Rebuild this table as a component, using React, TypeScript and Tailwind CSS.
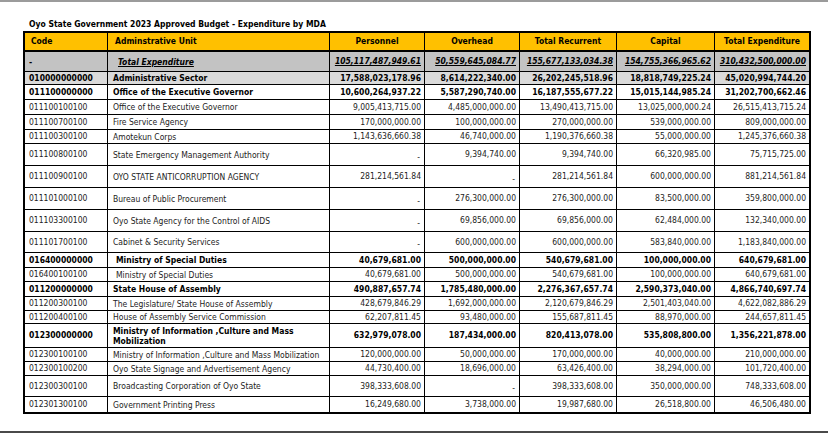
import React from "react";

type Row = {
  code: string;
  name: string;
  vals: string[];
  h: string;
  bold?: boolean;
  bg?: string;
  indent?: boolean;
  total?: boolean;
};

const rows: Row[] = [
  { code: "-", name: "Total Expenditure", vals: ["105,117,487,949.61", "50,559,645,084.77", "155,677,133,034.38", "154,755,366,965.62", "310,432,500,000.00"], h: "h-[20px]", bold: true, bg: "bg-[#c3c3c3]", total: true },
  { code: "010000000000", name: "Administrative Sector", vals: ["17,588,023,178.96", "8,614,222,340.00", "26,202,245,518.96", "18,818,749,225.24", "45,020,994,744.20"], h: "h-[13px]", bold: true, bg: "bg-[#dadada]" },
  { code: "011100000000", name: "Office of the Executive Governor", vals: ["10,600,264,937.22", "5,587,290,740.00", "16,187,555,677.22", "15,015,144,985.24", "31,202,700,662.46"], h: "h-[15px]", bold: true },
  { code: "011100100100", name: "Office of the Executive Governor", vals: ["9,005,413,715.00", "4,485,000,000.00", "13,490,413,715.00", "13,025,000,000.24", "26,515,413,715.24"], h: "h-[15px]" },
  { code: "011100700100", name: "Fire Service Agency", vals: ["170,000,000.00", "100,000,000.00", "270,000,000.00", "539,000,000.00", "809,000,000.00"], h: "h-[15px]" },
  { code: "011100300100", name: "Amotekun Corps", vals: ["1,143,636,660.38", "46,740,000.00", "1,190,376,660.38", "55,000,000.00", "1,245,376,660.38"], h: "h-[14px]" },
  { code: "011100800100", name: "State Emergency Management Authority", vals: ["-", "9,394,740.00", "9,394,740.00", "66,320,985.00", "75,715,725.00"], h: "h-[22px]" },
  { code: "011100900100", name: "OYO STATE ANTICORRUPTION AGENCY", vals: ["281,214,561.84", "-", "281,214,561.84", "600,000,000.00", "881,214,561.84"], h: "h-[22px]" },
  { code: "011101000100", name: "Bureau of Public Procurement", vals: ["-", "276,300,000.00", "276,300,000.00", "83,500,000.00", "359,800,000.00"], h: "h-[22px]" },
  { code: "011103300100", name: "Oyo State Agency for the Control of AIDS", vals: ["-", "69,856,000.00", "69,856,000.00", "62,484,000.00", "132,340,000.00"], h: "h-[22px]" },
  { code: "011101700100", name: "Cabinet & Security Services", vals: ["-", "600,000,000.00", "600,000,000.00", "583,840,000.00", "1,183,840,000.00"], h: "h-[21px]" },
  { code: "016400000000", name: "Ministry of Special Duties", vals: ["40,679,681.00", "500,000,000.00", "540,679,681.00", "100,000,000.00", "640,679,681.00"], h: "h-[15px]", bold: true, indent: true },
  { code: "016400100100", name: "Ministry of Special Duties", vals: ["40,679,681.00", "500,000,000.00", "540,679,681.00", "100,000,000.00", "640,679,681.00"], h: "h-[14px]", indent: true },
  { code: "011200000000", name: "State House of Assembly", vals: ["490,887,657.74", "1,785,480,000.00", "2,276,367,657.74", "2,590,373,040.00", "4,866,740,697.74"], h: "h-[15px]", bold: true },
  { code: "011200300100", name: "The Legislature/ State House of Assembly", vals: ["428,679,846.29", "1,692,000,000.00", "2,120,679,846.29", "2,501,403,040.00", "4,622,082,886.29"], h: "h-[14px]" },
  { code: "011200400100", name: "House of Assembly Service Commission", vals: ["62,207,811.45", "93,480,000.00", "155,687,811.45", "88,970,000.00", "244,657,811.45"], h: "h-[13px]" },
  { code: "012300000000", name: "Ministry of Information ,Culture and Mass Mobilization", vals: ["632,979,078.00", "187,434,000.00", "820,413,078.00", "535,808,800.00", "1,356,221,878.00"], h: "h-[24px]", bold: true },
  { code: "012300100100", name: "Ministry of Information ,Culture and Mass Mobilization", vals: ["120,000,000.00", "50,000,000.00", "170,000,000.00", "40,000,000.00", "210,000,000.00"], h: "h-[14px]" },
  { code: "012300100200", name: "Oyo State Signage and Advertisement Agency", vals: ["44,730,400.00", "18,696,000.00", "63,426,400.00", "38,294,000.00", "101,720,400.00"], h: "h-[14px]" },
  { code: "012300300100", name: "Broadcasting Corporation of Oyo State", vals: ["398,333,608.00", "-", "398,333,608.00", "350,000,000.00", "748,333,608.00"], h: "h-[21px]" },
  { code: "012301300100", name: "Government Printing Press", vals: ["16,249,680.00", "3,738,000.00", "19,987,680.00", "26,518,800.00", "46,506,480.00"], h: "h-[15px]" },
];

const GRID = "grid grid-cols-[83px_222px_95px_95px_97px_98px_94px]";

export default function App() {
  return (
    <div className="w-[828px] h-[434px] bg-white flex flex-col font-['DejaVu_Sans_Condensed','DejaVu_Sans',sans-serif] text-[8.5px] text-[#1c1c1c] overflow-hidden">
      <div className="h-[2px] bg-[#9b9b9b]" />
      <div className="mt-[17px] h-[11px] leading-[11px] pl-[29px] font-bold text-black">
        Oyo State Government 2023 Approved Budget - Expenditure by MDA
      </div>
      <div className="mt-[1px] ml-[23px] w-[788px] border-2 border-black">
        <div className={`${GRID} h-[19px] bg-[#ffc000] border-b-2 border-black font-bold text-black`}>
          <div className="border-r border-black flex items-center pl-[6px]">Code</div>
          <div className="border-r border-black flex items-center pl-[7px]">Adminstrative Unit</div>
          <div className="border-r border-black flex items-center justify-center">Personnel</div>
          <div className="border-r border-black flex items-center justify-center">Overhead</div>
          <div className="border-r border-black flex items-center justify-center">Total Recurrent</div>
          <div className="border-r border-black flex items-center justify-center">Capital</div>
          <div className="flex items-center justify-center">Total Expenditure</div>
        </div>
        {rows.map((r, i) => (
          <div
            key={i}
            className={`${GRID} ${r.h} ${r.bg ?? "bg-white"} ${i === rows.length - 1 ? "" : "border-b border-black"} ${r.bold ? "font-bold text-black" : ""}`}
          >
            <div className={`border-r border-black flex pl-[4px] ${r.total ? "items-end pb-[2px]" : "items-center"}`}>
              {r.code}
            </div>
            <div
              className={`border-r border-black flex items-center leading-[10px] ${r.total ? "pl-[10px] italic underline" : r.indent ? "pl-[8px]" : "pl-[5px]"}`}
            >
              {r.name}
            </div>
            {r.vals.map((v, j) => (
              <div
                key={j}
                className={`${j < 4 ? "border-r border-black" : ""} flex justify-end ${v === "-" ? "items-end pr-[4px] pb-[1px]" : "items-center pr-[3px]"} ${r.total ? "italic underline" : ""}`}
              >
                {v}
              </div>
            ))}
          </div>
        ))}
      </div>
      <div className="flex-1" />
      <div className="h-[2px] bg-[#4a4a4a] mb-[1px]" />
    </div>
  );
}
